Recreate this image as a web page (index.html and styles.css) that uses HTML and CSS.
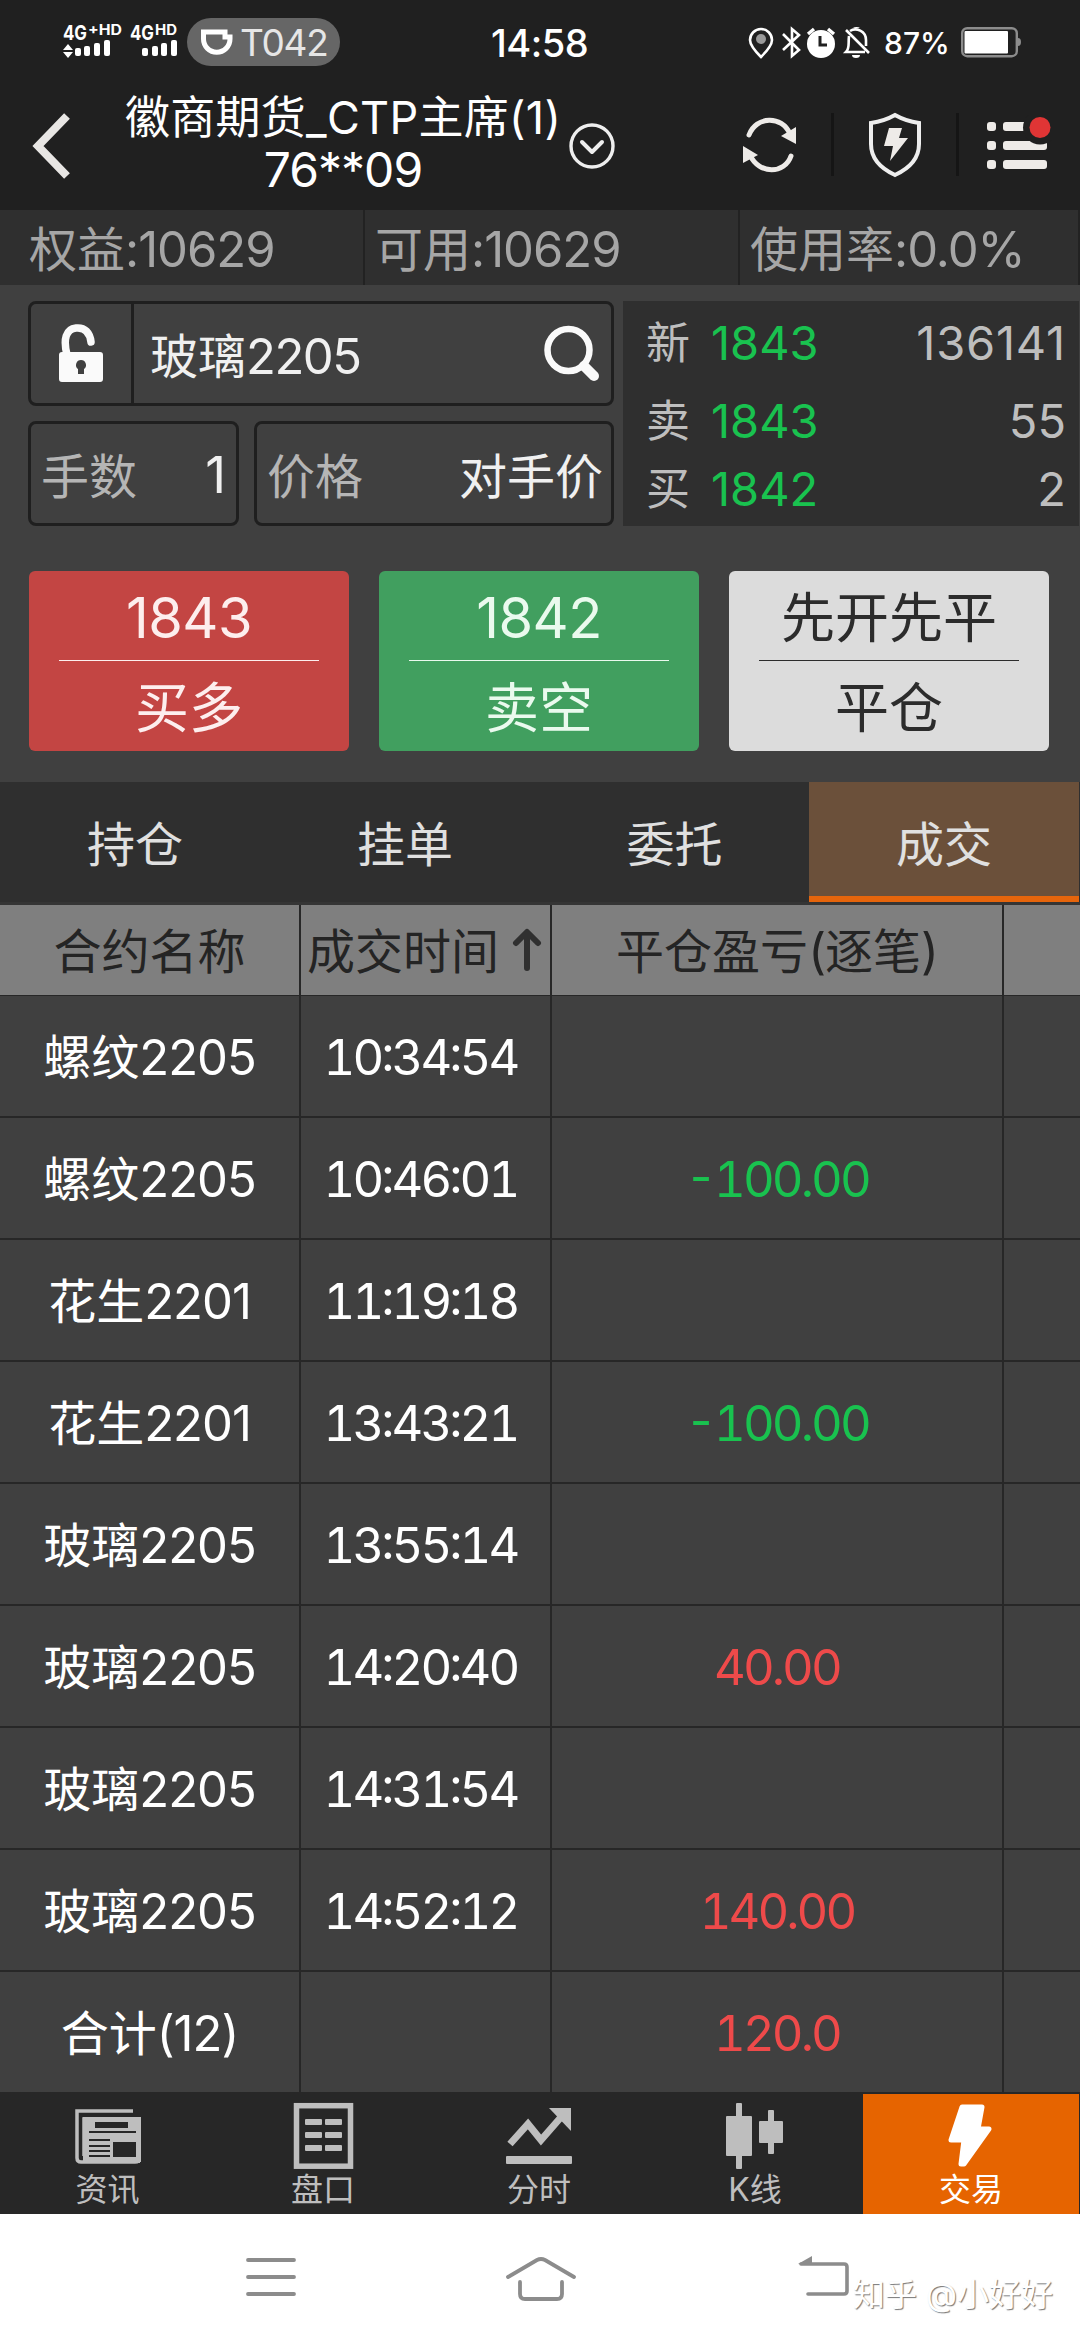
FILE: index.html
```
<!DOCTYPE html>
<html lang="zh-CN">
<head>
  <meta charset="utf-8">
  <title>交易</title>
  <link rel="stylesheet" href="styles.css">
</head>
<body>
  <div class="status">
    <svg class="signals" width="126" height="48" viewBox="0 0 126 48">
      <g fill="#fff">
        <text class="net" x="0" y="22" textLength="24" lengthAdjust="spacingAndGlyphs">4G</text>
        <text class="net-sup" x="25" y="17" textLength="34" lengthAdjust="spacingAndGlyphs">+HD</text>
        <text class="net" x="67" y="22" textLength="24" lengthAdjust="spacingAndGlyphs">4G</text>
        <text class="net-sup" x="92" y="17" textLength="22" lengthAdjust="spacingAndGlyphs">HD</text>
        <path d="M0 32l5-6 5 6zM0 34h10l-5 6z"/>
        <rect x="12" y="30" width="6" height="8" rx="2"/>
        <rect x="21" y="28" width="6" height="10" rx="2"/>
        <rect x="31" y="25" width="6" height="13" rx="2"/>
        <rect x="41" y="22" width="6" height="16" rx="2"/>
        <rect x="79" y="30" width="6" height="8" rx="2"/>
        <rect x="89" y="28" width="6" height="10" rx="2"/>
        <rect x="98" y="25" width="6" height="13" rx="2"/>
        <rect x="108" y="22" width="6" height="16" rx="2"/>
      </g>
    </svg>
    <div class="pill">
      <svg width="34" height="28" viewBox="0 0 34 28">
        <path d="M4.5 4H26V9H31V11A13 13 0 0 1 4.5 11Z" fill="none" stroke="#fff" stroke-width="5"/>
      </svg>
      <span>T042</span>
    </div>
    <div class="clock">14:58</div>
    <svg class="status-icons" width="124" height="34" viewBox="0 0 124 34">
      <path d="M13 31C6 24 2 19 2 14a11 11 0 0 1 22 0c0 5-4 10-11 17z" fill="none" stroke="#fff" stroke-width="2.6"/>
      <circle cx="13" cy="13" r="5" fill="#999"/>
      <path d="M35 8l16 16-7 6V3l7 6-16 15" fill="none" stroke="#fff" stroke-width="2.6"/>
      <circle cx="73" cy="18" r="14" fill="#fff"/>
      <path d="M60 8l6-5M86 8l-6-5" stroke="#fff" stroke-width="3.4"/>
      <path d="M72 10v9h7" fill="none" stroke="#202020" stroke-width="3"/>
      <path d="M98 4l23 23M101 10c-1 8 1 12-3 16h19M102 5c6-4 16 0 16 9v6" fill="none" stroke="#fff" stroke-width="2.6"/>
      <path d="M104 29h8a4 3 0 0 1-8 0zM105 2a4 2 0 0 1 7 0z" fill="#fff"/>
    </svg>
    <div class="percent">87%</div>
    <svg class="battery" width="60" height="32" viewBox="0 0 60 32">
      <rect x="1.2" y="1.2" width="54.6" height="28" rx="5" fill="none" stroke="#8c8c8c" stroke-width="2.4"/>
      <rect x="3.5" y="4" width="43.5" height="22.5" rx="1" fill="#fff"/>
      <path d="M57 11q3 0 3 4t-3 4z" fill="#8c8c8c"/>
    </svg>
  </div>

  <header class="header">
    <svg class="back" width="40" height="68" viewBox="0 0 40 68">
      <path d="M36 4L7 34l29 30" fill="none" stroke="#e8e6e4" stroke-width="8"/>
    </svg>
    <div class="title">
      <div class="title-main">徽商期货<span class="num">_CTP</span>主席<span class="num">(1)</span></div>
      <div class="title-sub">76**09</div>
    </div>
    <svg class="expand" width="46" height="46" viewBox="0 0 46 46">
      <circle cx="23" cy="23" r="21" fill="none" stroke="#eee" stroke-width="3.4"/>
      <path d="M13 19l10 10 10-10" fill="none" stroke="#eee" stroke-width="4" stroke-linecap="round" stroke-linejoin="round"/>
    </svg>
    <div class="tool tool-refresh">
      <svg width="54" height="56" viewBox="0 0 54 56">
        <path d="M6 18C13-1 39-2 47 17M48 39C42 57 16 58 7 38" fill="none" stroke="#eeebe8" stroke-width="5" stroke-linecap="round"/>
        <path d="M53 10v17L38 19zM0 29v17l15-8z" fill="#eeebe8"/>
      </svg>
    </div>
    <div class="tool tool-shield">
      <svg width="54" height="66" viewBox="0 0 54 66">
        <path d="M27 3C20 7 10 10 3 11V32C3 47 14 57 27 63C40 57 51 47 51 32V11C44 10 34 7 27 3Z" fill="none" stroke="#eee" stroke-width="4"/>
        <path d="M21 16H34L31 26H40L22 49L25 34H16Z" fill="#eeebe8"/>
      </svg>
    </div>
    <div class="tool tool-list">
      <svg width="66" height="60" viewBox="0 0 66 60">
        <g fill="#eeebe8">
          <rect x="0" y="7" width="9" height="9" rx="3"/>
          <rect x="0" y="26" width="9" height="9" rx="3"/>
          <rect x="0" y="45" width="9" height="9" rx="3"/>
          <rect x="16" y="7" width="44" height="9" rx="3"/>
          <rect x="16" y="26" width="44" height="9" rx="3"/>
          <rect x="16" y="45" width="44" height="9" rx="3"/>
        </g>
        <circle cx="53" cy="12.5" r="17" fill="#202020"/>
        <circle cx="53" cy="12.5" r="10.5" fill="#e03535"/>
      </svg>
    </div>
  </header>

  <div class="funds">
    <div>权益<span class="num">:10629</span></div>
    <div>可用<span class="num">:10629</span></div>
    <div>使用率<span class="num">:0.0%</span></div>
  </div>

  <section class="order">
    <div class="fields">
      <div class="box contract">
        <div class="lock">
          <svg width="46" height="60" viewBox="0 0 46 60">
            <path d="M9 31C5 15 8 5 18 4C27 3 32 9 33 18" fill="none" stroke="#fafafa" stroke-width="7.5" stroke-linecap="round"/>
            <path d="M4 28H42Q45 28 45 31V55Q45 58 42 58H4Q1 58 1 55V31Q1 28 4 28ZM23 36a5 5 0 0 0-3 9v5h6v-5a5 5 0 0 0-3-9z" fill="#fafafa" fill-rule="evenodd"/>
          </svg>
        </div>
        <div class="contract-name">玻璃<span class="num">2205</span></div>
        <svg class="search" width="58" height="58" viewBox="0 0 58 58">
          <ellipse cx="25.5" cy="25" rx="21" ry="21" fill="none" stroke="#fafafa" stroke-width="6.5"/>
          <path d="M41 41L51 51" stroke="#fafafa" stroke-width="10" stroke-linecap="round"/>
        </svg>
      </div>
      <div class="box lots"><label>手数</label><span class="num">1</span></div>
      <div class="box price"><label>价格</label><span>对手价</span></div>
    </div>
    <div class="quotes">
      <div class="quote"><label>新</label><b>1843</b><span>136141</span></div>
      <div class="quote"><label>卖</label><b>1843</b><span>55</span></div>
      <div class="quote"><label>买</label><b>1842</b><span>2</span></div>
    </div>
  </section>

  <section class="actions">
    <button class="action buy"><span class="action-top num">1843</span><span class="action-name">买多</span></button>
    <button class="action sell"><span class="action-top num">1842</span><span class="action-name">卖空</span></button>
    <button class="action close"><span class="action-top">先开先平</span><span class="action-name">平仓</span></button>
  </section>

  <nav class="tabs">
    <div class="tab">持仓</div>
    <div class="tab">挂单</div>
    <div class="tab">委托</div>
    <div class="tab active">成交</div>
  </nav>

  <table class="trades">
    <colgroup>
      <col class="col-name">
      <col class="col-time">
      <col class="col-profit">
      <col>
    </colgroup>
    <tr>
      <th>合约名称</th>
      <th class="sorted">成交时间<svg class="arrow" width="30" height="44" viewBox="0 0 30 44"><path d="M15 40V5M4 15L15 4l11 11" fill="none" stroke="#303030" stroke-width="6" stroke-linecap="round" stroke-linejoin="round"/></svg></th>
      <th>平仓盈亏<span class="num">(</span>逐笔<span class="num">)</span></th>
      <th></th>
    </tr>
    <tr><td>螺纹<span class="num">2205</span></td><td class="num time">10:34:54</td><td></td><td></td></tr>
    <tr><td>螺纹<span class="num">2205</span></td><td class="num time">10:46:01</td><td class="num down">-100.00</td><td></td></tr>
    <tr><td>花生<span class="num">2201</span></td><td class="num time">11:19:18</td><td></td><td></td></tr>
    <tr><td>花生<span class="num">2201</span></td><td class="num time">13:43:21</td><td class="num down">-100.00</td><td></td></tr>
    <tr><td>玻璃<span class="num">2205</span></td><td class="num time">13:55:14</td><td></td><td></td></tr>
    <tr><td>玻璃<span class="num">2205</span></td><td class="num time">14:20:40</td><td class="num up">40.00</td><td></td></tr>
    <tr><td>玻璃<span class="num">2205</span></td><td class="num time">14:31:54</td><td></td><td></td></tr>
    <tr><td>玻璃<span class="num">2205</span></td><td class="num time">14:52:12</td><td class="num up">140.00</td><td></td></tr>
    <tr class="total"><td>合计<span class="num">(12)</span></td><td></td><td class="num up">120.0</td><td></td></tr>
  </table>

  <nav class="bottom">
    <div class="item">
      <svg width="66" height="68" viewBox="0 0 66 68">
        <path d="M58 9H2V56Q2 60 6 60H60Q64 60 64 57V17H9V54" fill="none" stroke="#bebebe" stroke-width="3.5"/>
        <path d="M8 15H66V40H8Z" fill="#bebebe"/>
        <path d="M20 20h33v6H20zM14 29h47v2H14z" fill="#272727"/>
        <path d="M8 38h30v22H8zM61 38h5v22h-5zM8 55h57v6H8z" fill="#bebebe"/>
        <path d="M14 37h21v2H14zM14 43h21v2H14zM14 48h21v2H14zM14 53h21v2H14z" fill="#272727"/>
      </svg>
      <span>资讯</span>
    </div>
    <div class="item">
      <svg width="66" height="68" viewBox="0 0 66 68">
        <rect x="6.5" y="3.7" width="54" height="60.5" fill="none" stroke="#bebebe" stroke-width="5.5"/>
        <g fill="#bebebe">
          <rect x="15" y="17" width="17" height="6" rx="1"/><rect x="35" y="17" width="17" height="6" rx="1"/>
          <rect x="15" y="30" width="17" height="6" rx="1"/><rect x="35" y="30" width="17" height="6" rx="1"/>
          <rect x="15" y="43" width="17" height="6" rx="1"/><rect x="35" y="43" width="17" height="6" rx="1"/>
        </g>
      </svg>
      <span>盘口</span>
    </div>
    <div class="item">
      <svg width="66" height="68" viewBox="0 0 66 68">
        <path d="M4 42L22 22L35 38L56 14" fill="none" stroke="#bebebe" stroke-width="7"/>
        <path d="M43 6H65V29Z" fill="#bebebe"/>
        <rect x="0" y="54" width="66" height="8" rx="1" fill="#bebebe"/>
      </svg>
      <span>分时</span>
    </div>
    <div class="item">
      <svg width="66" height="68" viewBox="0 0 66 68">
        <g fill="#bebebe">
          <rect x="4" y="14" width="26" height="40" rx="1"/>
          <rect x="14" y="1" width="6" height="66" rx="1"/>
          <rect x="37" y="19" width="24" height="22" rx="1"/>
          <rect x="46" y="8" width="6" height="44" rx="1"/>
        </g>
      </svg>
      <span>K线</span>
    </div>
    <div class="item active">
      <svg width="66" height="68" viewBox="0 0 66 68">
        <path d="M24 5H44L40 27H51L26 62H23L26 38H13Z" fill="#fff" stroke="#fff" stroke-width="5" stroke-linejoin="round"/>
      </svg>
      <span>交易</span>
    </div>
  </nav>

  <footer class="system">
    <svg class="sys-menu" width="52" height="44" viewBox="0 0 52 44">
      <path d="M3 4h46M3 21h46M3 38h46" stroke="#8c8c8c" stroke-width="3.8" stroke-linecap="round"/>
    </svg>
    <svg class="sys-home" width="72" height="46" viewBox="0 0 72 46">
      <path d="M3 21L32 4Q36 2 40 4L69 21M15 26V38Q15 43 20 43H52Q57 43 57 38V26" fill="none" stroke="#8c8c8c" stroke-width="3.8" stroke-linecap="round"/>
    </svg>
    <svg class="sys-back" width="52" height="44" viewBox="0 0 52 44">
      <path d="M3 8H46Q49 8 49 11V35Q49 38 46 38H10" fill="none" stroke="#8c8c8c" stroke-width="3.6" stroke-linecap="round"/>
      <path d="M0 8L14 0V9Z" fill="#8c8c8c"/>
    </svg>
    <div class="watermark">知乎 @小好好</div>
  </footer>
</body>
</html>
```

FILE: styles.css
```
* {
  box-sizing: border-box;
}

body {
  margin: 0;
  width: 1080px;
  height: 2340px;
  overflow: hidden;
  background: #404040;
  color: #fff;
  font-family: Inter, "Noto Sans CJK SC", sans-serif;
  font-size: 48px;
}

svg {
  display: block;
  flex: none;
}

.num {
  font-size: 49px;
  letter-spacing: -1px;
}

/* status bar */
.status {
  height: 84px;
  padding: 18px 0 0 63px;
  background: #202020;
  display: flex;
  align-items: flex-start;
}

.net {
  font: bold 20px Inter, sans-serif;
}

.net-sup {
  font: bold 14px Inter, sans-serif;
}

.pill {
  width: 153px;
  height: 48px;
  margin-left: -2px;
  padding-left: 12px;
  border-radius: 24px;
  background: #666;
  color: #e6e6e6;
  font-size: 37px;
  letter-spacing: -1.2px;
  display: flex;
  align-items: center;
  gap: 7px;
}

.clock {
  width: 110px;
  margin-left: 151px;
  line-height: 50px;
  font-size: 38px;
  font-weight: 500;
  letter-spacing: -0.5px;
}

.status-icons {
  margin: 8px 0 0 147px;
}

.percent {
  width: 77px;
  margin-left: 12px;
  line-height: 50px;
  font-size: 30px;
  font-weight: 500;
}

.battery {
  margin-top: 9px;
}

/* header */
.header {
  height: 126px;
  padding-left: 31px;
  background: #202020;
  display: flex;
  align-items: flex-start;
}

.back {
  margin-top: 28px;
}

.title {
  flex: none;
  width: 440px;
  padding-top: 6px;
  margin-left: 52px;
  text-align: center;
  white-space: nowrap;
}

.title-main,
.title-main .num {
  font-size: 45px;
  line-height: 56px;
  letter-spacing: 0.3px;
}

.title-sub {
  line-height: 48px;
  letter-spacing: -1px;
}

.expand {
  margin: 39px 0 0 6px;
}

.tool {
  flex: none;
  height: 63px;
  margin-top: 29px;
  display: flex;
  align-items: center;
  justify-content: center;
}

.tool-refresh {
  width: 122px;
  margin-left: 94px;
}

.tool-shield {
  width: 128px;
  border-left: 3px solid #151515;
  border-right: 3px solid #151515;
}

.tool-list {
  width: 121px;
}

/* funds */
.funds {
  height: 75px;
  background: #2f2f2f;
  color: #a6a6a6;
  line-height: 71px;
  display: grid;
  grid-template-columns: 365px 375px 1fr;
}

.funds div {
  padding: 4px 0 0 10px;
  border-right: 2px solid #222;
}

.funds div:first-child {
  padding-left: 29px;
}

/* order form */
.order {
  height: 286px;
  padding: 16px 1px 0 28px;
  display: flex;
  gap: 9px;
}

.fields {
  width: 586px;
  height: 225px;
  display: grid;
  grid-template-columns: 211px 1fr;
  grid-template-rows: 105px 105px;
  gap: 15px;
}

.box {
  border: 3px solid #1f1f1f;
  border-radius: 8px;
  display: flex;
  align-items: center;
  justify-content: space-between;
  color: #f0f0f0;
}

.box label {
  color: #b5b5b5;
}

.contract {
  grid-column: 1 / 3;
  padding-right: 10px;
}

.lock {
  width: 103px;
  height: 99px;
  border-right: 3px solid #1f1f1f;
  display: flex;
  align-items: center;
  justify-content: center;
}

.contract-name {
  flex: 1;
  padding: 0 0 2px 16px;
}

.contract-name .num {
  letter-spacing: -1.5px;
}

.lots {
  padding: 0 11px 2px 10px;
}

.lots .num {
  padding-top: 4px;
  font-size: 51px;
}

.price {
  padding: 0 8px 2px 10px;
}

.quotes {
  flex: 1;
  height: 225px;
  padding: 2px 13px 0 23px;
  background: #2f2f2f;
  color: #bebebe;
}

.quote {
  height: 68px;
  font-size: 47px;
  line-height: 68px;
  display: flex;
}

.quote:first-child {
  height: 84px;
  line-height: 80px;
}

.quote:first-child span {
  letter-spacing: 0.8px;
}

.quote label {
  width: 65px;
  font-size: 44px;
}

.quote b {
  flex: 1;
  font-weight: 400;
  color: #19c24f;
}

/* buy / sell / close */
.actions {
  height: 211px;
  padding: 0 31px 31px 29px;
  display: grid;
  grid-template-columns: repeat(3, 320px);
  gap: 30px;
}

.action {
  padding: 0 30px;
  border: 0;
  border-radius: 6px;
  font-family: inherit;
  font-size: 54px;
  color: #fdeeee;
  display: flex;
  flex-direction: column;
}

.action span {
  width: 260px;
  height: 90px;
  line-height: 95px;
}

.action .action-top {
  border-bottom: 1px solid;
}

.action .num {
  font-size: 56px;
  letter-spacing: -0.5px;
}

.buy {
  background: #c34543;
}

.sell {
  background: #419f5f;
  color: #eafaee;
}

.close {
  background: #dcdcdc;
  color: #2c2c2c;
}

/* tabs */
.tabs {
  height: 123px;
  border-bottom: 3px solid #353535;
  background: #2f2f2f;
  display: grid;
  grid-template-columns: 270px 270px 269px 270px;
}

.tab {
  line-height: 125px;
  height: 120px;
  text-align: center;
  color: #e0e0e0;
}

.tab.active {
  border-bottom: 6px solid #e6650c;
  background: #6b503a;
}

/* trades */
.trades {
  width: 1080px;
  table-layout: fixed;
  border-collapse: separate;
  border-spacing: 0;
  text-align: center;
}

.col-name {
  width: 301px;
}

.col-time {
  width: 251px;
}

.col-profit {
  width: 452px;
}

.trades th,
.trades td {
  height: 122px;
  padding: 4px 0 0;
  border-right: 2px solid #272727;
  border-bottom: 2px solid #272727;
  line-height: 60px;
  white-space: nowrap;
}

.trades th {
  height: 91px;
  border-bottom-width: 1px;
  background: #7f7f7f;
  color: #242424;
  font-weight: 400;
}

.trades th:last-child,
.trades td:last-child {
  border-right: 0;
}

.trades .sorted {
  text-align: left;
  padding-left: 6px;
}

/* digits of equal width, raised colon and minus */
.trades td.num {
  font-feature-settings: "tnum", "case";
  letter-spacing: -2.9px;
}

.trades .time {
  padding-right: 10px;
}

.arrow {
  display: inline-block;
  margin-left: 13px;
  vertical-align: -3px;
}

.trades .total td {
  height: 120px;
  border-bottom: 0;
}

.down {
  color: #19c24f;
}

.up {
  color: #ee4a4a;
}

/* bottom navigation */
.bottom {
  height: 122px;
  padding-top: 2px;
  background: #272727;
  display: grid;
  grid-template-columns: 215px 216px 216px 216px 216px;
}

.item {
  padding-top: 8px;
  color: #bebebe;
  font-size: 32px;
  line-height: 40px;
  display: flex;
  flex-direction: column;
  align-items: center;
}

.item.active {
  background: #e66400;
  color: #fff;
}

/* system navigation */
.system {
  position: relative;
  height: 126px;
  padding: 42px 0 0 245px;
  background: #fff;
  display: flex;
}

.sys-home {
  margin-left: 208px;
}

.sys-back {
  margin-left: 221px;
}

.watermark {
  position: absolute;
  right: 27px;
  bottom: 21px;
  font-size: 32px;
  line-height: 48px;
  text-shadow: 1px 1px 1px #777;
}
```
